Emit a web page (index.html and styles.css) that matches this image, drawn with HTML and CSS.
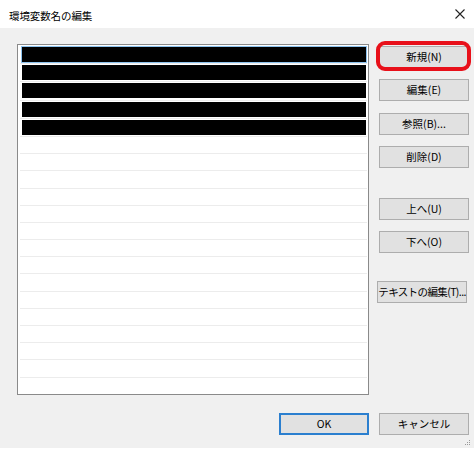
FILE: index.html
```html
<!DOCTYPE html>
<html lang="ja">
<head>
<meta charset="utf-8">
<title>環境変数名の編集</title>
<link rel="stylesheet" href="styles.css">
</head>
<body>
<div class="window">
  <div class="titlebar">
    <span class="title">環境変数名の編集</span>
    <svg class="close" width="10" height="10" viewBox="0 0 10 10"><path d="M0.5 0.5 L9.5 9.5 M9.5 0.5 L0.5 9.5" stroke="#222" stroke-width="1.1" fill="none"/></svg>
  </div>
  <div class="body">
    <div class="main">
      <div class="list">
        <div class="row"><div class="bar sel"></div></div>
        <div class="row"><div class="bar"></div></div>
        <div class="row"><div class="bar"></div></div>
        <div class="row"><div class="bar"></div></div>
        <div class="row"><div class="bar"></div></div>
        <div class="row"></div>
        <div class="row"></div>
        <div class="row"></div>
        <div class="row"></div>
        <div class="row"></div>
        <div class="row"></div>
        <div class="row"></div>
        <div class="row"></div>
        <div class="row"></div>
        <div class="row"></div>
        <div class="row"></div>
        <div class="row"></div>
        <div class="row"></div>
        <div class="row"></div>
        <div class="row"></div>
        <div class="row"></div>
      </div>
      <div class="side">
        <button class="btn highlight b-new">新規(N)</button>
        <button class="btn b-edit">編集(E)</button>
        <button class="btn b-browse">参照(B)...</button>
        <button class="btn b-del">削除(D)</button>
        <button class="btn b-up">上へ(U)</button>
        <button class="btn b-down">下へ(O)</button>
        <button class="btn b-text">テキストの編集(T)...</button>
      </div>
    </div>
    <div class="footer">
      <button class="btn default">OK</button>
      <button class="btn">キャンセル</button>
    </div>
    <svg class="grip" width="6" height="6" viewBox="0 0 6 6"><rect x="4" y="0" width="1" height="1" fill="#999"/><rect x="4" y="2" width="1" height="1" fill="#999"/><rect x="2" y="2" width="1" height="1" fill="#999"/><rect x="4" y="4" width="1" height="1" fill="#999"/><rect x="2" y="4" width="1" height="1" fill="#999"/><rect x="0" y="4" width="1" height="1" fill="#999"/></svg>
  </div>
</div>
</body>
</html>
```

FILE: styles.css
```css
* { box-sizing: border-box; }
html, body { margin: 0; padding: 0; background: #fff; }
body {
  font-family: "Noto Sans CJK JP", "Noto Sans", sans-serif;
  color: #000;
}
.window {
  width: 474px;
  height: 450px;
  display: flex;
  flex-direction: column;
}
.titlebar {
  height: 28px;
  display: flex;
  align-items: center;
  justify-content: space-between;
  padding: 2px 9px 0 9px;
  background: #fff;
}
.title {
  font-size: 10.5px;
  letter-spacing: -0.1px;
}
.close { display: block; margin-top: -3px; margin-right: 0; }
.body {
  height: 420px;
  background: #f0f0f0;
  position: relative;
  display: flex;
  flex-direction: column;
}
.main {
  display: flex;
  padding: 16px 0 0 17px;
}
.list {
  width: 352px;
  height: 351px;
  border: 1px solid #8a8a8a;
  background: #fff;
  padding: 1px 1px 0 2px;
  overflow: hidden;
}
.row {
  height: 17.2px;
  border-bottom: 1px solid #ececec;
}
.bar {
  height: 15px;
  margin: 1px 1px 0 2px;
  background: #000;
}
.bar.sel {
  outline: 1px solid #8cc2ee;
}
.side {
  margin-left: 10px;
  width: 90px;
  display: flex;
  flex-direction: column;
}
.btn {
  width: 90px;
  height: 22px;
  padding: 0;
  border: 1px solid #adadad;
  background: #e1e1e1;
  font-family: "Noto Sans CJK JP", "Noto Sans", sans-serif;
  font-size: 10.5px;
  color: #000;
  line-height: 1;
  white-space: nowrap;
}
.b-new { margin-top: 2px; }
.b-edit { margin-top: 11px; }
.b-browse { margin-top: 12px; }
.b-del { margin-top: 11px; }
.b-up { margin-top: 30px; }
.b-down { margin-top: 11px; }
.b-text { margin-top: 28px; margin-left: -2px; letter-spacing: -0.6px; }
.highlight { position: relative; }
.highlight::after {
  content: "";
  position: absolute;
  top: -6px;
  left: -4px;
  right: -3px;
  bottom: -4px;
  border: 4.5px solid #e8101a;
  border-radius: 9px;
}
.footer {
  display: flex;
  justify-content: flex-end;
  gap: 10px;
  margin-top: 18px;
  padding-right: 5px;
}
.btn.default {
  border: 2px solid #2b7fcf;
}
.grip {
  position: absolute;
  right: 3px;
  bottom: 2px;
}
```
